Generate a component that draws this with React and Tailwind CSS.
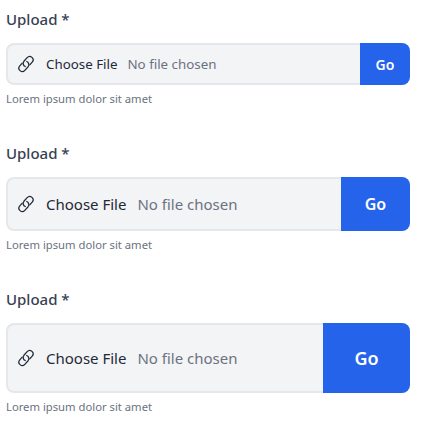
const FIELDS = [
  { id: 'sm', row: 'h-[42px]', text: 'text-[13.33px] pt-px', gap2: 'ml-[10px]', button: 'w-[50px] text-[14px]', gap: 'mb-[35px]' },
  { id: 'md', row: 'h-[54px]', text: 'text-[15px]', gap2: 'ml-[11px]', button: 'w-[69px] text-[16px]', gap: 'mb-[35px]' },
  { id: 'lg', row: 'h-[70px]', text: 'text-[15px]', gap2: 'ml-[11px]', button: 'w-[87px] text-[18px]', gap: '' },
];

function ChainIcon() {
  return (
    <svg viewBox="0 0 16 16" fill="none" stroke="currentColor" strokeWidth="1" strokeLinecap="round" className="w-5 h-5 mr-[10px] text-[#1f2937]">
      <g transform="rotate(-48 8 8)">
        <path d="M6.5 5.3H3.6a2.7 2.7 0 0 0 0 5.4H7.5a2.7 2.7 0 0 0 2.4-3.6" />
        <path d="M9.5 10.7h2.9a2.7 2.7 0 0 0 0-5.4H8.5a2.7 2.7 0 0 0-2.4 3.6" />
      </g>
    </svg>
  );
}

function UploadField({ field }) {
  return (
    <div className={field.gap}>
      <label className="block mb-[13px] text-[15px] leading-[22px] font-medium text-[#374151]">Upload *</label>
      <div className={`flex ${field.row}`}>
        <div className="flex flex-1 items-center rounded-l-lg border-2 border-r-0 border-[#e5e7eb] bg-[#f3f4f6] pl-[8px]">
          <ChainIcon />
          <span className={`${field.text} text-[#1f2937]`}>Choose File</span>
          <span className={`${field.text} ${field.gap2} text-[#6b7280]`}>No file chosen</span>
        </div>
        <button className={`rounded-r-lg bg-[#2563eb] font-semibold text-white ${field.button}`}>Go</button>
      </div>
      <p className="mt-[6px] text-[11.25px] leading-[16px] text-[#6b7280]">Lorem ipsum dolor sit amet</p>
    </div>
  );
}

export default function App() {
  return (
    <div className="w-[421px] h-[423px] pt-[8px] pl-[6px] pr-[11px] bg-white font-['Noto_Sans',sans-serif]">
      {FIELDS.map((field) => (
        <UploadField key={field.id} field={field} />
      ))}
    </div>
  );
}
